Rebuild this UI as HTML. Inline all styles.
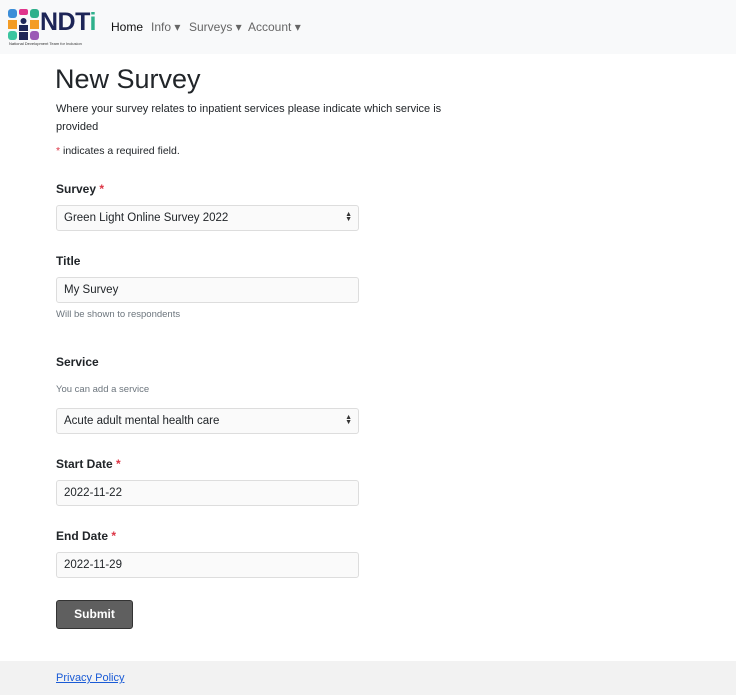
<!DOCTYPE html>
<html><head><style>
*{box-sizing:border-box;margin:0;padding:0}
body{width:736px;height:695px;font-family:"Liberation Sans",sans-serif;color:#212529;background:#fff;position:relative;overflow:hidden}
.nav{position:absolute;left:0;top:0;width:736px;height:54px;background:#f8f9fa}
.abs{position:absolute;white-space:nowrap}
.lbl{font-size:12px;font-weight:bold;color:#212529}
.req{color:#dc3545}
.field{position:absolute;left:56px;width:303px;height:26px;border:1px solid #ddd;border-radius:3px;background:#fafafa;font-size:11.5px;padding:6px 7px;color:#212529}
.help{font-size:9.5px;color:#6c757d}
.arr{position:absolute;right:6px;top:6px;font-size:7px;line-height:5px;color:#333}
</style></head><body>
<div class="nav">
<svg class="abs" style="left:8px;top:9px" width="31" height="31" viewBox="0 0 31 31">
<rect x="0" y="0" width="9" height="9" rx="3" fill="#3c8ed8"/>
<rect x="11" y="0" width="9" height="6" rx="2" fill="#e0358c"/>
<rect x="22" y="0" width="9" height="9" rx="3" fill="#2eb08b"/>
<rect x="0" y="11" width="9" height="9" fill="#f39c25"/>
<rect x="22" y="11" width="9" height="9" fill="#f39c25"/>
<circle cx="15.5" cy="12" r="3" fill="#1d2557"/>
<rect x="11" y="16" width="9" height="6" fill="#1d2557"/>
<rect x="0" y="22" width="9" height="9" rx="3" fill="#3bc5a0"/>
<rect x="11" y="23" width="9" height="8" fill="#1d2557"/>
<rect x="22" y="22" width="9" height="9" rx="3" fill="#9b59b6"/>
</svg>
<div class="abs" style="left:40px;top:8px;font-size:25px;font-weight:bold;color:#1d2557;letter-spacing:-0.5px">NDT<span style="color:#2eb08b">i</span></div>
<div class="abs" style="left:9px;top:41px;font-size:4px;color:#333">National Development Team for Inclusion</div>
<div class="abs" style="left:111px;top:20px;font-size:12px;color:#111">Home</div>
<div class="abs" style="left:151px;top:20px;font-size:12px;color:#666">Info ▾</div>
<div class="abs" style="left:189px;top:20px;font-size:12px;color:#666">Surveys ▾</div>
<div class="abs" style="left:248px;top:20px;font-size:12px;color:#666">Account ▾</div>
</div>
<div class="abs" style="left:55px;top:64px;font-size:27px;color:#212529">New Survey</div>
<div class="abs" style="left:56px;top:100px;font-size:11px;line-height:18px">Where your survey relates to inpatient services please indicate which service is<br>provided</div>
<div class="abs" style="left:56px;top:145px;font-size:10.5px"><span class="req">*</span> indicates a required field.</div>
<div class="abs lbl" style="left:56px;top:182px">Survey <span class="req">*</span></div>
<div class="field" style="top:205px">Green Light Online Survey 2022<div class="arr">▲<br>▼</div></div>
<div class="abs lbl" style="left:56px;top:254px">Title</div>
<div class="field" style="top:277px">My Survey</div>
<div class="abs help" style="left:56px;top:309px">Will be shown to respondents</div>
<div class="abs lbl" style="left:56px;top:355px">Service</div>
<div class="abs help" style="left:56px;top:384px">You can add a service</div>
<div class="field" style="top:408px">Acute adult mental health care<div class="arr">▲<br>▼</div></div>
<div class="abs lbl" style="left:56px;top:457px">Start Date <span class="req">*</span></div>
<div class="field" style="top:480px">2022-11-22</div>
<div class="abs lbl" style="left:56px;top:529px">End Date <span class="req">*</span></div>
<div class="field" style="top:552px">2022-11-29</div>
<div class="abs" style="left:56px;top:600px;width:77px;height:29px;background:#5f5f5f;border:1px solid #333;border-radius:3px;color:#fff;font-weight:bold;font-size:12px;text-align:center;line-height:27px">Submit</div>
<div class="abs" style="left:0;top:661px;width:736px;height:34px;background:#f2f2f2"></div>
<div class="abs" style="left:56px;top:672px;font-size:11px;color:#1a5bd6;text-decoration:underline">Privacy Policy</div>
</body></html>
